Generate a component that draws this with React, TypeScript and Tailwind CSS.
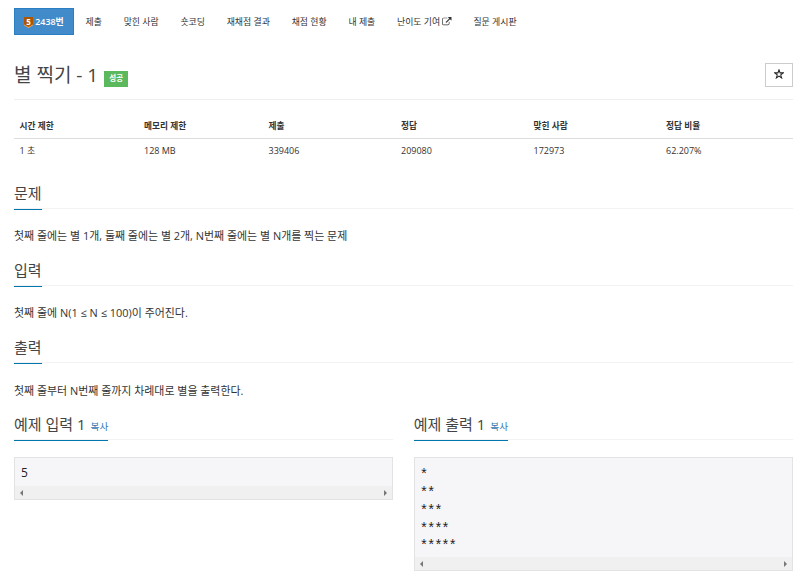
import React from 'react';

interface SectionTitleProps {
  title: string;
  copy?: boolean;
}

const menu = ['제출', '맞힌 사람', '숏코딩', '재채점 결과', '채점 현황', '내 제출', '난이도 기여', '질문 게시판'];

const info = [
  { label: '시간 제한', value: '1 초' },
  { label: '메모리 제한', value: '128 MB' },
  { label: '제출', value: '339406' },
  { label: '정답', value: '209080' },
  { label: '맞힌 사람', value: '172973' },
  { label: '정답 비율', value: '62.207%' },
];

const sections = [
  { title: '문제', body: '첫째 줄에는 별 1개, 둘째 줄에는 별 2개, N번째 줄에는 별 N개를 찍는 문제' },
  { title: '입력', body: '첫째 줄에 N(1 ≤ N ≤ 100)이 주어진다.' },
  { title: '출력', body: '첫째 줄부터 N번째 줄까지 차례대로 별을 출력한다.' },
];

const TierBadge: React.FC = () => (
  <svg viewBox="0 0 18 22" className="mt-px mr-[2px] h-[11px] w-[9px] shrink-0 overflow-visible">
    <path d="M0 0h18v16l-9 6-9-6z" fill="#ad5600" />
    <path d="M0 15l9 5L18 15v1.500l-9 5.500-9-5.500z" fill="#f0b27c" />
    <text x="9" y="15" fontSize="16" fontWeight="700" fontFamily="Open Sans, sans-serif" textAnchor="middle" fill="#fff">5</text>
  </svg>
);

const ExternalLink: React.FC = () => (
  <svg viewBox="0 0 1792 1792" className="w-[9.500px] h-[9.500px] ml-[2px] shrink-0" fill="currentColor">
    <path d="M1408 928v320q0 119-84.500 203.500T1120 1536H288q-119 0-203.500-84.500T0 1248V416q0-119 84.500-203.500T288 128h704q14 0 23 9t9 23v64q0 14-9 23t-23 9H288q-66 0-113 47t-47 113v832q0 66 47 113t113 47h832q66 0 113-47t47-113V928q0-14 9-23t23-9h64q14 0 23 9t9 23zM1792 64v512q0 26-19 45t-45 19-45-19l-176-176-652 652q-10 10-23 10t-23-10L695 983q-10-10-10-23t10-23l652-652-176-176q-19-19-19-45t19-45 45-19h512q26 0 45 19t19 45z" />
  </svg>
);

const SectionTitle: React.FC<SectionTitleProps> = ({ title, copy }) => (
  <div className="flex h-[31px] border-b border-[#f3f3f3]">
    <h2 className="flex h-[32px] items-baseline border-b border-[#0076b1] pt-[5px] text-[15px] leading-[20px] text-[#444]">
      {title}
      {copy && <a className="ml-[5px] text-[9.600px] text-[#3276b1]">복사</a>}
    </h2>
  </div>
);

const Sample: React.FC<{ title: string; lines: string[] }> = ({ title, lines }) => (
  <div className="flex-1">
    <SectionTitle title={title} copy />
    <div className="mt-[17px] border border-[#e3e3e6] bg-[#f6f6f9]">
      <pre className="px-[6px] pt-[6px] pb-[4px] font-['Open_Sans','Noto_Sans_CJK_KR',sans-serif] text-[12px] leading-[17.700px] text-[#222]">
        {lines.map((line) =>
          line[0] === '*' ? (
            <div key={line} className="-ml-px pt-[3px] -mb-[3px] font-['Liberation_Mono',monospace] text-[14px] tracking-[-1.200px]">{line}</div>
          ) : (
            <div key={line}>{line}</div>
          )
        )}
      </pre>
      <div className="flex h-[13px] items-center justify-between bg-[#f0f0f0] px-[5px]">
        <svg viewBox="0 0 3 6" className="h-[6px] w-[3px]"><path d="M3 0v6L0 3z" fill="#777" /></svg>
        <svg viewBox="0 0 3 6" className="h-[6px] w-[3px]"><path d="M0 0v6l3-3z" fill="#777" /></svg>
      </div>
    </div>
  </div>
);

const App: React.FC = () => {
  return (
    <div className="h-[582px] w-[800px] overflow-hidden bg-white pt-[8px] pr-[7px] pl-[14px] font-['Open_Sans','Noto_Sans_CJK_KR',sans-serif] text-[#333]">
      <nav className="flex h-[27px] text-[8.900px]">
        <a className="flex w-[60px] items-center justify-center border border-[#2a7fc4] bg-[#428bca] pt-px font-semibold text-white">
          <TierBadge />
          2438번
        </a>
        <div className="ml-[11.500px] flex items-center gap-[21.800px] pt-[1px]">
          {menu.map((item) => (
            <a key={item} className="flex items-center whitespace-nowrap">
              {item}
              {item === '난이도 기여' && <ExternalLink />}
            </a>
          ))}
        </div>
      </nav>

      <header className="flex h-[65px] items-start justify-between border-b border-[#eee] pt-[27px]">
        <div className="flex items-center">
          <h1 className="text-[19px] leading-[26px] text-[#444]">별 찍기 - 1</h1>
          <span className="mt-[7px] ml-[6px] flex h-[16px] w-[24px] items-center justify-center bg-[#5cb85c] pt-px text-[7.500px] font-bold text-white">
            성공
          </span>
        </div>
        <button className="mt-px flex h-[24px] w-[28px] items-center justify-center border border-[#ccc]">
          <svg viewBox="0 0 24 24" className="mr-px mb-[3px] h-[10px] w-[10px]" fill="none" stroke="#222" strokeWidth="2.500">
            <path d="M12 2l2.600 7.300h7.700l-6.200 4.700 2.300 7.500-6.400-4.500-6.400 4.500 2.300-7.500-6.200-4.700h7.700z" />
          </svg>
        </button>
      </header>

      <table className="mt-[13px] w-full table-fixed text-left text-[8.700px]">
        <colgroup>
          <col className="w-[124.500px]" />
          <col className="w-[124.500px]" />
          <col className="w-[132.500px]" />
          <col className="w-[132.500px]" />
          <col className="w-[132.500px]" />
          <col />
        </colgroup>
        <thead>
          <tr className="h-[25px] border-b border-[#ddd]">
            {info.map((item) => (
              <th key={item.label} className="pt-[3px] pl-[5.500px] font-bold">{item.label}</th>
            ))}
          </tr>
        </thead>
        <tbody>
          <tr className="h-[24px]">
            {info.map((item) => (
              <td key={item.label} className="pl-[5.500px] text-[9px]">{item.value}</td>
            ))}
          </tr>
        </tbody>
      </table>

      <main className="mt-[15.600px]">
        {sections.map((section) => (
          <section key={section.title} className="h-[77.300px]">
            <SectionTitle title={section.title} />
            <p className="mt-[17.500px] text-[10.950px] leading-[20px]">{section.body}</p>
          </section>
        ))}
        <div className="flex gap-[20.500px]">
          <Sample title="예제 입력 1" lines={['5']} />
          <Sample title="예제 출력 1" lines={['*', '**', '***', '****', '*****']} />
        </div>
      </main>
    </div>
  );
};

export default App;
